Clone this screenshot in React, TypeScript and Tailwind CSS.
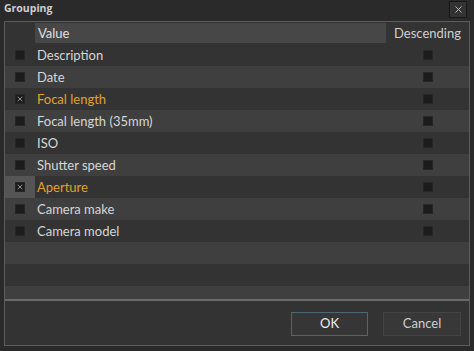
import { X } from "lucide-react";

const rows = [
  { label: "Description", checked: false },
  { label: "Date", checked: false },
  { label: "Focal length", checked: true },
  { label: "Focal length (35mm)", checked: false },
  { label: "ISO", checked: false },
  { label: "Shutter speed", checked: false },
  { label: "Aperture", checked: true, focus: true },
  { label: "Camera make", checked: false },
  { label: "Camera model", checked: false },
];

function Box({ checked }: { checked?: boolean }) {
  return (
    <div className="w-[10px] h-[10px] bg-[#1c1c1c] border border-[#262626] flex items-center justify-center">
      {checked && <X size={8} strokeWidth={2} className="text-[#c8c8c8]" />}
    </div>
  );
}

export default function App() {
  return (
    <div
      className="w-[474px] h-[351px] bg-[#2a2a2a] flex flex-col text-[13px] text-[#d6d6d6]"
      style={{ fontFamily: 'Lato, "Open Sans", sans-serif' }}
    >
      {/* Title bar */}
      <div className="h-[21px] shrink-0 flex items-start justify-between pl-[4px] pr-[7px]">
        <span
          className="text-[10.5px] font-bold text-[#d0d0d0] mt-[1px]"
          style={{ fontFamily: '"Open Sans", sans-serif' }}
        >
          Grouping
        </span>
        <button className="w-[18px] h-[17px] mt-[1px] border border-[#171717] bg-[#333333] flex items-center justify-center text-[#c4c4c4]">
          <X size={11} strokeWidth={2} />
        </button>
      </div>

      {/* Body frame */}
      <div className="mx-[4px] mb-[5px] flex-1 flex flex-col border border-[#5c5c5c] bg-[#3e3e3e]">
        <div className="h-[277px] shrink-0 flex flex-col overflow-hidden">
          {/* Header */}
          <div className="h-[22px] shrink-0 flex bg-[#333333] leading-none">
            <div className="w-[30px]" />
            <div className="w-[351px] mt-[1px] mb-[1px] bg-[#474747] flex items-center pl-[3px] text-[#e0e0e0]">
              Value
            </div>
            <div className="flex-1 flex items-center justify-end pr-[8px] text-[#cfcfcf]">
              Descending
            </div>
          </div>
          {rows.map((r, i) => (
            <div
              key={r.label}
              className={`h-[22px] shrink-0 flex items-center leading-none ${i % 2 === 0 ? "bg-[#333333]" : "bg-[#3f3f3f]"}`}
            >
              <div className={`w-[30px] h-full flex items-center justify-center ${r.focus ? "bg-[#555555]" : ""}`}>
                <Box checked={r.checked} />
              </div>
              <div className={`w-[351px] pl-[2px] pt-[1px] ${r.checked ? "text-[#e2a128]" : "text-[#d6d6d6]"}`}>
                {r.label}
              </div>
              <div className="flex-1 flex justify-center pl-[1px]">
                <Box />
              </div>
            </div>
          ))}
          <div className="h-[22px] shrink-0 bg-[#3f3f3f]" />
          <div className="h-[22px] shrink-0 bg-[#333333]" />
          <div className="h-[22px] shrink-0 bg-[#3f3f3f]" />
        </div>

        {/* Footer */}
        <div className="flex-1 border-t-2 border-[#6a6a6a] bg-[#333333] flex items-center justify-end gap-[15px] pr-[8px]">
          <button className="w-[77px] h-[24px] mt-[2px] border border-[#4d6874] bg-[#363636] text-[#ededed]">
            OK
          </button>
          <button className="w-[78px] h-[24px] mt-[2px] border border-[#444] bg-[#383838] text-[#cfcfcf]">
            Cancel
          </button>
        </div>
      </div>
    </div>
  );
}
